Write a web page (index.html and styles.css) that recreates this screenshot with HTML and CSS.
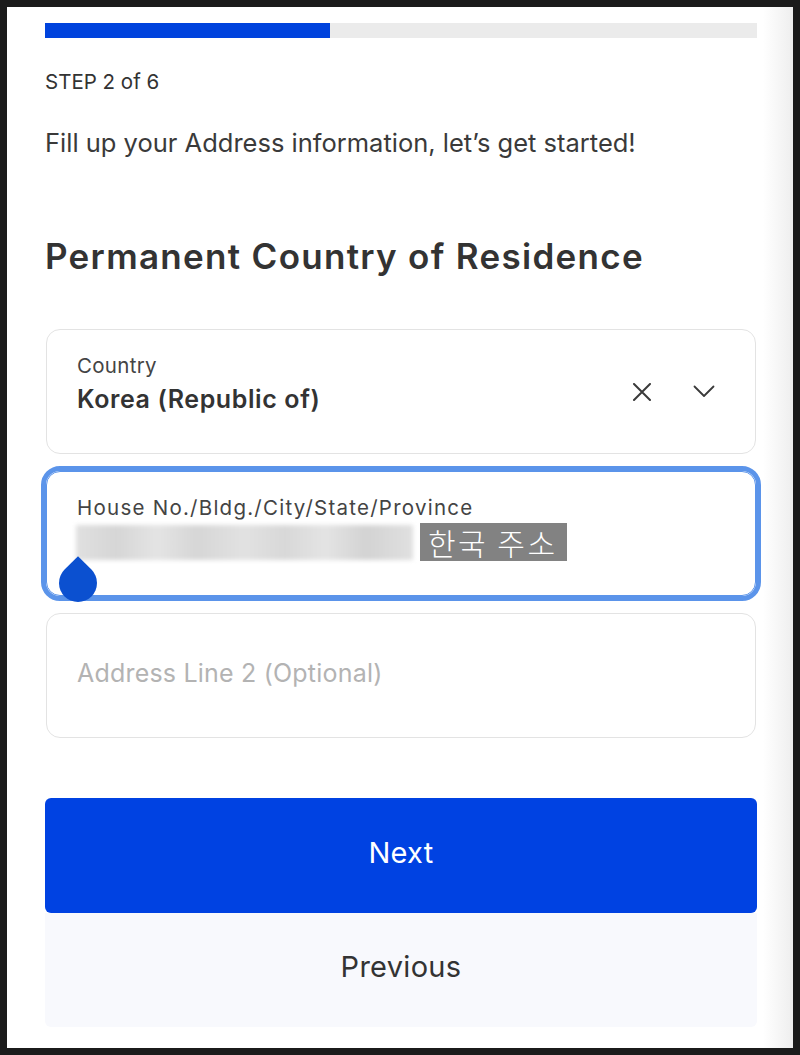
FILE: index.html
```html
<!DOCTYPE html>
<html lang="en">
<head>
<meta charset="utf-8">
<title>Address information</title>
<link rel="stylesheet" href="styles.css">
</head>
<body>
<div class="frame">
  <main class="panel">
    <div class="progress"><div class="progress-fill" style="width:40%"></div></div>
    <p class="step">STEP 2 of 6</p>
    <p class="intro">Fill up your Address information, let’s get started!</p>
    <h1 class="title">Permanent Country of Residence</h1>

    <div class="fields">
      <div class="field select">
        <div class="field-body">
          <span class="label">Country</span>
          <span class="value">Korea (Republic of)</span>
        </div>
        <div class="actions">
          <svg class="icon-x" width="20" height="18" viewBox="0 0 20 18" aria-hidden="true">
            <path d="M2 1 L18 17 M18 1 L2 17" stroke="#3a3a3a" stroke-width="2" fill="none" stroke-linecap="round"/>
          </svg>
          <svg class="icon-chev" width="22" height="13" viewBox="0 0 22 13" aria-hidden="true">
            <path d="M1.5 1.5 L11 11 L20.5 1.5" stroke="#3a3a3a" stroke-width="1.8" fill="none" stroke-linecap="round" stroke-linejoin="round"/>
          </svg>
        </div>
      </div>

      <div class="field focused">
        <div class="field-body">
          <span class="label label-wide">House No./Bldg./City/State/Province</span>
          <div class="value-row">
            <span class="blurred"></span>
            <span class="chip">한국 주소</span>
          </div>
        </div>
        <span class="caret-handle"></span>
      </div>

      <div class="field empty">
        <span class="placeholder">Address Line 2 (Optional)</span>
      </div>
    </div>

    <div class="buttons">
      <button class="btn btn-primary" type="button">Next</button>
      <button class="btn btn-secondary" type="button">Previous</button>
    </div>
  </main>
</div>
</body>
</html>
```

FILE: styles.css
```css
* {
  box-sizing: border-box;
}

html, body {
  margin: 0;
  padding: 0;
}

body {
  background: #1b1b1b;
  font-family: "Inter", "Noto Sans", "Noto Sans CJK KR", sans-serif;
  color: #333333;
}

.frame {
  padding: 7px;
  height: 1055px;
}

.panel {
  height: 1041px;
  background: linear-gradient(to right, #ffffff 0, #ffffff calc(100% - 30px), #eeeeee 100%);
  padding: 16px 36px 0 38px;
}

.progress {
  width: 712px;
  height: 15px;
  background: #ebebeb;
}

.progress-fill {
  height: 100%;
  background: #0043dd;
}

.step {
  margin: 32px 0 0;
  font-size: 20.5px;
  line-height: 24px;
  color: #333333;
}

.intro {
  margin: 34px 0 0;
  font-size: 25.5px;
  line-height: 30px;
  color: #3a3a3a;
}

.title {
  margin: 78px 0 0;
  font-size: 35px;
  line-height: 40px;
  font-weight: 600;
  color: #333333;
  letter-spacing: 1.3px;
}

.fields {
  margin-top: 53px;
  width: 712px;
  padding: 0 1px;
  display: flex;
  flex-direction: column;
  gap: 17px;
}

.field {
  position: relative;
  height: 125px;
  border: 1px solid #e3e3e3;
  border-radius: 14px;
  background: #ffffff;
  padding: 24px 30px;
  display: flex;
  align-items: flex-start;
}

.field-body {
  display: flex;
  flex-direction: column;
  flex: 1;
}

.label {
  font-size: 20.5px;
  line-height: 24px;
  color: #444444;
  letter-spacing: 0.3px;
}

.label-wide {
  letter-spacing: 1.25px;
}

.value {
  margin-top: 6px;
  font-size: 25px;
  line-height: 30px;
  font-weight: 600;
  color: #333333;
  letter-spacing: 0.6px;
}

.select .actions {
  align-self: center;
  display: flex;
  align-items: center;
  gap: 41px;
  margin-right: 10px;
}

.focused {
  border-color: #5b94ea;
  outline: 5px solid #5b94ea;
  border-radius: 14px;
}

.value-row {
  display: flex;
  align-items: center;
  margin-top: 3px;
}

.blurred {
  display: block;
  width: 337px;
  height: 35px;
  margin-left: -1px;
  background: linear-gradient(to right, #e0e0e0 0%, #d6d6d6 12%, #e4e4e4 24%, #d6d6d6 36%, #e2e2e2 50%, #d8d8d8 62%, #e4e4e4 74%, #d3d3d3 86%, #e0e0e0 100%);
  filter: blur(2px);
}

.chip {
  margin-left: 7px;
  height: 38px;
  width: 147px;
  padding: 0 8px;
  background: #828282;
  color: #ffffff;
  font-family: "Noto Sans CJK KR", sans-serif;
  font-size: 30px;
  line-height: 38px;
  font-weight: 300;
  letter-spacing: 2.5px;
  white-space: nowrap;
}

.caret-handle {
  position: absolute;
  left: 12px;
  top: 92px;
  width: 38px;
  height: 38px;
  background: #0b50d0;
  border-radius: 0 50% 50% 50%;
  transform: rotate(45deg);
}

.empty {
  align-items: center;
  padding: 0 30px 6px;
}

.placeholder {
  font-size: 25px;
  line-height: 30px;
  color: #b3b3b3;
  letter-spacing: 0.2px;
}

.buttons {
  margin-top: 60px;
  width: 712px;
  display: flex;
  flex-direction: column;
}

.btn {
  display: block;
  width: 100%;
  height: 115px;
  border: none;
  border-radius: 6px;
  padding: 0 0 7px;
  font-family: inherit;
  font-size: 29px;
  letter-spacing: 0.3px;
  cursor: pointer;
}

.btn-primary {
  background: #0042e2;
  color: #ffffff;
}

.btn-secondary {
  height: 114px;
  background: #f8f9fd;
  color: #333333;
  border-radius: 0 0 6px 6px;
}
```
